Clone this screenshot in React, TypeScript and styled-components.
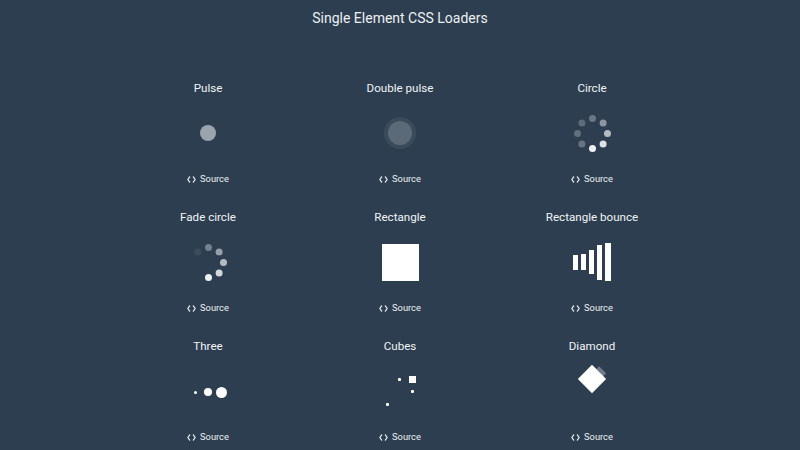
import React from "react";
import styled, { createGlobalStyle, css } from "styled-components";

const GlobalStyle = createGlobalStyle`
  html, body {
    margin: 0;
    padding: 0;
    background-color: #2c3e50;
  }
  body {
    font-family: Roboto, "Liberation Sans", sans-serif;
    color: #ecf0f1;
  }
`;

const Page = styled.div`
  width: 100%;
  min-height: 100vh;
  background-color: #2c3e50;
  display: flex;
  flex-direction: column;
  align-items: center;
`;

const PageTitle = styled.h1`
  margin: 0;
  height: 36px;
  line-height: 36px;
  font-size: 14px;
  font-weight: 400;
  color: #ecf0f1;
`;

const Grid = styled.div`
  margin-top: 44px;
  display: grid;
  grid-template-columns: repeat(3, 192px);
  row-gap: 24px;
`;

const Cell = styled.div`
  display: flex;
  flex-direction: column;
  align-items: center;
`;

const CellTitle = styled.h2`
  margin: 0;
  height: 16px;
  line-height: 16px;
  font-size: 11.6px;
  font-weight: 400;
  color: #f2f4f5;
`;

const Stage = styled.div`
  height: 74px;
  width: 100%;
  display: flex;
  align-items: center;
  justify-content: center;
`;

const SourceLink = styled.a`
  margin-top: 3px;
  height: 12px;
  display: flex;
  align-items: center;
  gap: 4px;
  font-size: 9.3px;
  line-height: 12px;
  color: #ecf0f1;
  text-decoration: none;
  svg {
    display: block;
  }
`;

/* ---- loaders ---- */

const dot = (x: number, y: number, a: number) =>
  `${x}px ${y}px 0 0 rgba(255, 255, 255, ${a})`;

const Pulse = styled.div`
  width: 16px;
  height: 16px;
  border-radius: 50%;
  background: rgba(255, 255, 255, 0.53);
`;

const DoublePulse = styled.div`
  width: 24px;
  height: 24px;
  border-radius: 50%;
  background: rgba(255, 255, 255, 0.23);
  box-shadow: 0 0 0 4px rgba(255, 255, 255, 0.07);
`;

const ring = (alphas: number[], r: number) =>
  alphas
    .map((a, i) => {
      const ang = (i * Math.PI) / 4;
      return { x: Math.sin(ang) * r, y: -Math.cos(ang) * r, a };
    })
    .filter((d) => d.a > 0)
    .map((d) => dot(+d.x.toFixed(1), +d.y.toFixed(1), d.a))
    .join(", ");

const DotRing = styled.div<{ $alphas: number[] }>`
  width: 7px;
  height: 7px;
  border-radius: 50%;
  background: transparent;
  ${(p) => css`
    box-shadow: ${ring(p.$alphas, 15)};
  `}
`;

const Rectangle = styled.div`
  width: 37px;
  height: 37px;
  background: #ffffff;
`;

const Bars = styled.div`
  display: flex;
  align-items: center;
  gap: 2.5px;
`;

const Bar = styled.span<{ $h: number; $w: number }>`
  display: block;
  width: ${(p) => p.$w}px;
  height: ${(p) => p.$h}px;
  background: #ffffff;
`;

const Three = styled.div`
  display: flex;
  align-items: center;
  margin-top: 2px;
`;

const ThreeSlot = styled.span`
  width: 13px;
  display: flex;
  justify-content: center;
`;

const ThreeDot = styled.span<{ $s: number }>`
  display: block;
  width: ${(p) => p.$s}px;
  height: ${(p) => p.$s}px;
  border-radius: 50%;
  background: #ffffff;
`;

const Cubes = styled.div`
  display: grid;
  grid-template-columns: repeat(3, 12.3px);
  grid-template-rows: repeat(3, 12.3px);
  margin-top: 2px;
`;

const CubeSlot = styled.span`
  display: flex;
  align-items: center;
  justify-content: center;
`;

const Cube = styled.span<{ $s: number }>`
  display: block;
  width: ${(p) => p.$s}px;
  height: ${(p) => p.$s}px;
  background: #ffffff;
  border-radius: ${(p) => (p.$s < 4 ? "1px" : "0")};
`;

const Diamond = styled.div`
  position: relative;
  width: 20px;
  height: 20px;
  transform: translateY(-12px) rotate(45deg);
  &::before {
    content: "";
    position: absolute;
    width: 10px;
    height: 10px;
    top: -4px;
    left: 5.5px;
    background: rgba(255, 255, 255, 0.32);
  }
  &::after {
    content: "";
    position: absolute;
    inset: 0;
    background: #ffffff;
  }
`;

const CodeIcon = () => (
  <svg width="9" height="7" viewBox="0 0 9 7" fill="none">
    <path
      d="M2.7 0.9 L0.8 3.5 L2.7 6.1 M6.3 0.9 L8.2 3.5 L6.3 6.1"
      stroke="#ecf0f1"
      strokeWidth="1.25"
      strokeLinecap="round"
      strokeLinejoin="round"
    />
  </svg>
);

const cubeMap = [0, 3, 7, 0, 0, 3, 3, 0, 0];

const loaders: { title: string; node: React.ReactNode }[] = [
  { title: "Pulse", node: <Pulse /> },
  { title: "Double pulse", node: <DoublePulse /> },
  {
    title: "Circle",
    node: <DotRing $alphas={[0.3, 0.45, 0.65, 0.85, 0.92, 0.28, 0.26, 0.24]} />,
  },
  {
    title: "Fade circle",
    node: <DotRing $alphas={[0.35, 0.5, 0.65, 0.8, 0.92, 0, 0, 0.08]} />,
  },
  { title: "Rectangle", node: <Rectangle /> },
  {
    title: "Rectangle bounce",
    node: (
      <Bars>
        {[
          [15, 5],
          [16, 5.5],
          [24, 5.5],
          [35, 5.5],
          [38, 6],
        ].map(([h, w], i) => (
          <Bar key={i} $h={h} $w={w} />
        ))}
      </Bars>
    ),
  },
  {
    title: "Three",
    node: (
      <Three>
        {[3, 8, 11].map((s) => (
          <ThreeSlot key={s}>
            <ThreeDot $s={s} />
          </ThreeSlot>
        ))}
      </Three>
    ),
  },
  {
    title: "Cubes",
    node: (
      <Cubes>
        {cubeMap.map((s, i) => (
          <CubeSlot key={i}>{s > 0 && <Cube $s={s} />}</CubeSlot>
        ))}
      </Cubes>
    ),
  },
  { title: "Diamond", node: <Diamond /> },
];

export default function App() {
  return (
    <Page>
      <GlobalStyle />
      <PageTitle>Single Element CSS Loaders</PageTitle>
      <Grid>
        {loaders.map((l) => (
          <Cell key={l.title}>
            <CellTitle>{l.title}</CellTitle>
            <Stage>{l.node}</Stage>
            <SourceLink href="#">
              <CodeIcon />
              Source
            </SourceLink>
          </Cell>
        ))}
      </Grid>
    </Page>
  );
}
